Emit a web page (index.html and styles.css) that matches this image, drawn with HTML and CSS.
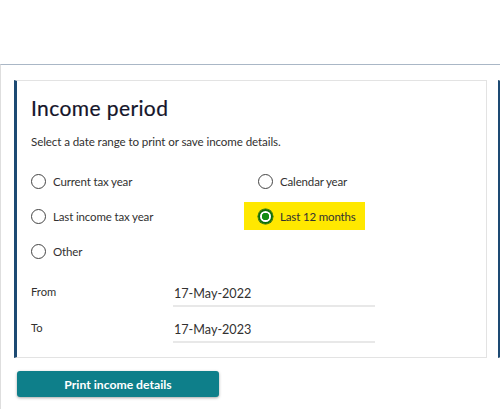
FILE: index.html
```html
<!DOCTYPE html>
<html lang="en">
<head>
<meta charset="utf-8">
<title>Income period</title>
<link rel="stylesheet" href="styles.css">
</head>
<body>
<div class="spacer"></div>
<main class="panel">
  <div class="cards">
    <section class="card">
      <h2 class="title">Income period</h2>
      <p class="desc">Select a date range to print or save income details.</p>
      <div class="options">
        <label class="opt"><span class="radio"></span><span>Current tax year</span></label>
        <label class="opt col2"><span class="radio"></span><span>Calendar year</span></label>
        <label class="opt"><span class="radio"></span><span>Last income tax year</span></label>
        <label class="opt col2 hl"><span class="radio checked"></span><span>Last 12 months</span></label>
        <label class="opt"><span class="radio"></span><span>Other</span></label>
      </div>
      <div class="dates">
        <div class="drow"><span class="dlabel">From</span><span class="dval">17-May-2022</span></div>
        <div class="drow"><span class="dlabel">To</span><span class="dval">17-May-2023</span></div>
      </div>
    </section>
    <section class="card next"></section>
  </div>
  <button class="btn" type="button">Print income details</button>
</main>
</body>
</html>
```
FILE: styles.css
```css
html, body {
  margin: 0;
  padding: 0;
  background: #fff;
  font-family: "Lato", "Noto Sans", sans-serif;
  color: #323130;
  overflow: hidden;
}
.spacer { height: 64px; }
.panel {
  border-top: 1px solid #aab7c6;
  border-left: 1px solid #dedede;
  padding: 15px 0 0 13px;
  height: 345px;
  box-sizing: border-box;
  overflow: hidden;
}
.cards {
  display: flex;
  gap: 11px;
}
.card {
  width: 473px;
  flex: none;
  box-sizing: border-box;
  height: 278px;
  border: 1px solid #e3e3e3;
  border-left: 3px solid #1d4a73;
  padding: 15px 0 0 14px;
}
.card.next { width: 40px; border-right: none; }
.title {
  margin: 0;
  font-size: 21px;
  font-weight: 400;
  letter-spacing: 0.4px;
  color: #15152a;
  line-height: 24px;
  -webkit-text-stroke: 0.2px #15152a;
}
.desc {
  margin: 14px 0 0;
  font-size: 11.6px;
  letter-spacing: -0.1px;
  line-height: 16px;
  color: #323130;
}
.options {
  display: grid;
  grid-template-columns: 213px auto;
  grid-auto-rows: 28px;
  row-gap: 7px;
  margin-top: 17px;
  justify-items: start;
}
.opt {
  display: flex;
  align-items: center;
  gap: 7px;
  font-size: 11.5px;
  letter-spacing: -0.15px;
  color: #323130;
  white-space: nowrap;
}
.opt.col2 { grid-column: 2; padding-left: 14px; }
.hl { background: #ffe800; width: 121px; box-sizing: border-box; }
.radio {
  width: 13px;
  height: 13px;
  border: 1px solid #444;
  border-radius: 50%;
  flex: none;
  box-sizing: content-box;
}
.radio.checked {
  border: 2px solid #0d6e0d;
  width: 11px;
  height: 11px;
  background: radial-gradient(circle, #118c11 0 3.5px, #fff 4px 100%);
  box-shadow: 0 0 0 0.5px #1a5a1a;
}
.dates {
  margin-top: 10px;
}
.drow {
  display: flex;
  align-items: center;
  height: 36px;
}
.dlabel {
  width: 142px;
  font-size: 11.2px;
  color: #323130;
  margin-top: -4px;
}
.dval {
  width: 202px;
  box-sizing: border-box;
  padding: 0 0 4px 1px;
  margin-top: 6px;
  font-size: 12.6px;
  color: #323130;
  border-bottom: 2px solid #e8e8e8;
}
.btn {
  display: block;
  margin-top: 13px;
  margin-left: 3px;
  width: 202px;
  height: 26px;
  border: none;
  border-radius: 3px;
  background: #0e7f8a;
  color: #fff;
  font-family: inherit;
  font-weight: 700;
  font-size: 12.2px;
  box-shadow: 0 1px 3px rgba(0,0,0,0.35);
}
```
